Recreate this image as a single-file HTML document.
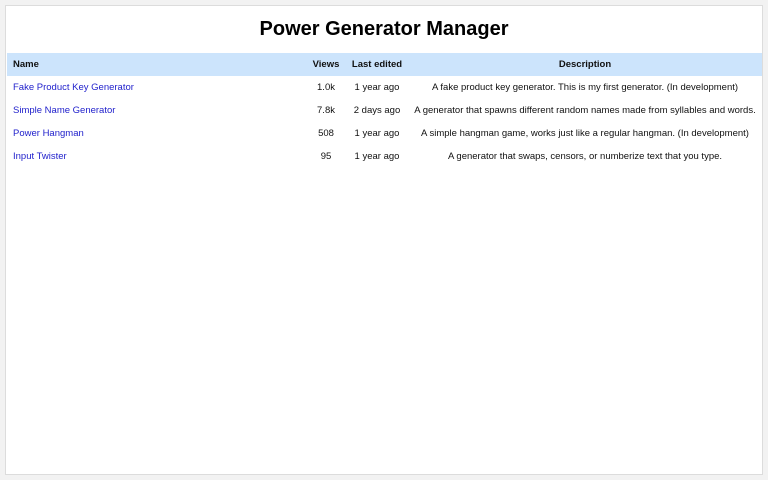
<!DOCTYPE html>
<html><head><style>
body{margin:0;background:#f2f2f2;font-family:"Liberation Sans",sans-serif;}
.p{position:absolute;left:5px;top:5px;width:756px;height:468px;background:#fff;border:1px solid #dcdcdc;}
h1{position:absolute;left:0;right:0;top:12px;margin:0;text-align:center;font-size:20px;font-weight:bold;color:#000;}
table{position:absolute;left:1px;top:47px;width:755px;border-collapse:collapse;font-size:9.5px;}
th{background:#cce4fc;height:23px;padding:0;font-weight:bold;color:#111;}
td{height:23px;padding:0;text-align:center;color:#111;}
td.n,th.n{text-align:left;padding-left:6px;}
a{color:#2222cc;text-decoration:none;}
</style></head><body>
<div class="p">
<h1>Power Generator Manager</h1>
<table>
<tr><th class="n" style="width:293px">Name</th><th style="width:40px">Views</th><th style="width:62px">Last edited</th><th>Description</th></tr>
<tr><td class="n"><a>Fake Product Key Generator</a></td><td>1.0k</td><td>1 year ago</td><td>A fake product key generator. This is my first generator. (In development)</td></tr>
<tr><td class="n"><a>Simple Name Generator</a></td><td>7.8k</td><td>2 days ago</td><td>A generator that spawns different random names made from syllables and words.</td></tr>
<tr><td class="n"><a>Power Hangman</a></td><td>508</td><td>1 year ago</td><td>A simple hangman game, works just like a regular hangman. (In development)</td></tr>
<tr><td class="n"><a>Input Twister</a></td><td>95</td><td>1 year ago</td><td>A generator that swaps, censors, or numberize text that you type.</td></tr>
</table>
</div>
</body></html>
